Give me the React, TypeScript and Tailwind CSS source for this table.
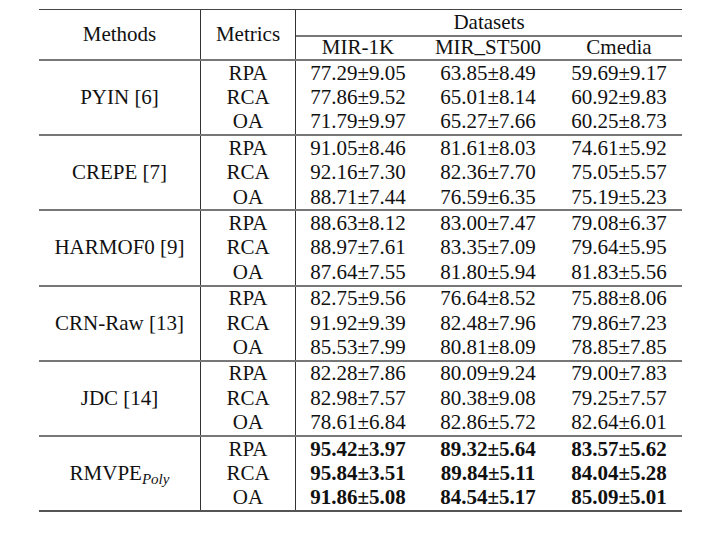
import React from "react";

type Group = { name: React.ReactNode; rows: [string, string, string, string][]; bold?: boolean };

const groups: Group[] = [
  {
    name: "PYIN [6]",
    rows: [
      ["RPA", "77.29±9.05", "63.85±8.49", "59.69±9.17"],
      ["RCA", "77.86±9.52", "65.01±8.14", "60.92±9.83"],
      ["OA", "71.79±9.97", "65.27±7.66", "60.25±8.73"],
    ],
  },
  {
    name: "CREPE [7]",
    rows: [
      ["RPA", "91.05±8.46", "81.61±8.03", "74.61±5.92"],
      ["RCA", "92.16±7.30", "82.36±7.70", "75.05±5.57"],
      ["OA", "88.71±7.44", "76.59±6.35", "75.19±5.23"],
    ],
  },
  {
    name: "HARMOF0 [9]",
    rows: [
      ["RPA", "88.63±8.12", "83.00±7.47", "79.08±6.37"],
      ["RCA", "88.97±7.61", "83.35±7.09", "79.64±5.95"],
      ["OA", "87.64±7.55", "81.80±5.94", "81.83±5.56"],
    ],
  },
  {
    name: "CRN-Raw [13]",
    rows: [
      ["RPA", "82.75±9.56", "76.64±8.52", "75.88±8.06"],
      ["RCA", "91.92±9.39", "82.48±7.96", "79.86±7.23"],
      ["OA", "85.53±7.99", "80.81±8.09", "78.85±7.85"],
    ],
  },
  {
    name: "JDC [14]",
    rows: [
      ["RPA", "82.28±7.86", "80.09±9.24", "79.00±7.83"],
      ["RCA", "82.98±7.57", "80.38±9.08", "79.25±7.57"],
      ["OA", "78.61±6.84", "82.86±5.72", "82.64±6.01"],
    ],
  },
  {
    name: (
      <span>
        RMVPE
        <span className="italic text-[15px] relative top-[4px]">Poly</span>
      </span>
    ),
    bold: true,
    rows: [
      ["RPA", "95.42±3.97", "89.32±5.64", "83.57±5.62"],
      ["RCA", "95.84±3.51", "89.84±5.11", "84.04±5.28"],
      ["OA", "91.86±5.08", "84.54±5.17", "85.09±5.01"],
    ],
  },
];

export default function App() {
  return (
    <div className="w-[710px] h-[533px] bg-white text-[#111] pt-[9px] pl-[39px]" style={{ fontFamily: '"Liberation Serif", "Times New Roman", serif' }}>
      <div className="w-[643px] text-[21px] leading-none">
        {/* header */}
        <div className="flex border-t border-[#444] border-b-[2px] border-b-[#777]">
          <div className="w-[162px] h-[49px] flex items-center justify-center border-r border-[#333]">Methods</div>
          <div className="w-[95px] h-[49px] flex items-center justify-center border-r border-[#333]">Metrics</div>
          <div className="flex-1 flex flex-col">
            <div className="h-[27px] flex items-center justify-center border-b-[2px] border-[#777]">Datasets</div>
            <div className="h-[22px] flex pb-[2px]">
              <div className="w-[124px] flex items-center justify-center">MIR-1K</div>
              <div className="w-[136px] flex items-center justify-center">
                <span>
                  MIR<span className="relative -top-[2px]">_</span>ST500
                </span>
              </div>
              <div className="flex-1 flex items-center justify-center">Cmedia</div>
            </div>
          </div>
        </div>
        {groups.map((g, gi) => (
          <div key={gi} className={"flex border-b-[2px] " + (gi === groups.length - 1 ? "border-[#555]" : "border-[#777]")}>
            <div className="w-[162px] flex items-center justify-center border-r border-[#333]">{g.name}</div>
            <div className="w-[95px] flex flex-col border-r border-[#333]">
              {g.rows.map((r, ri) => (
                <div key={ri} className="h-[24.4px] flex items-center justify-center">{r[0]}</div>
              ))}
            </div>
            <div className={"flex-1 flex flex-col " + (g.bold ? "font-bold" : "")}>
              {g.rows.map((r, ri) => (
                <div key={ri} className="h-[24.4px] flex">
                  <div className="w-[124px] flex items-center justify-center">{r[1]}</div>
                  <div className="w-[136px] flex items-center justify-center">{r[2]}</div>
                  <div className="flex-1 flex items-center justify-center">{r[3]}</div>
                </div>
              ))}
            </div>
          </div>
        ))}
      </div>
    </div>
  );
}
